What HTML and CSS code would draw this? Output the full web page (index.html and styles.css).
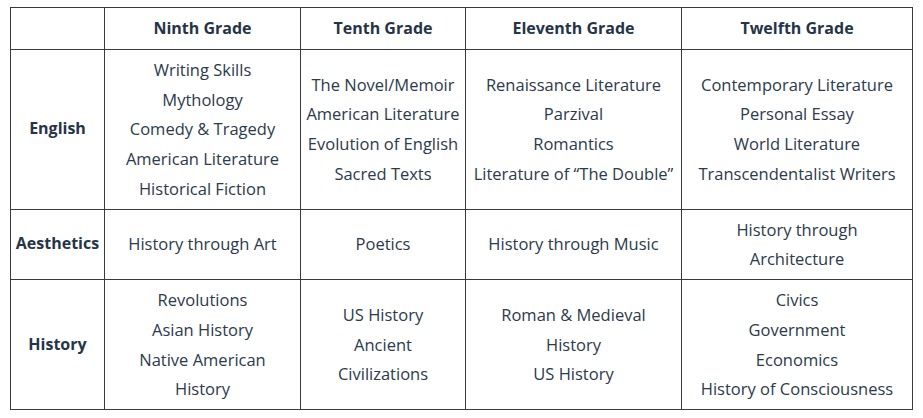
FILE: index.html
```html
<!DOCTYPE html>
<html>
<head>
<meta charset="utf-8">
<link rel="stylesheet" href="styles.css">
</head>
<body>
<table class="grades">
  <colgroup>
    <col class="c0"><col class="c1"><col class="c2"><col class="c3"><col class="c4">
  </colgroup>
  <thead>
    <tr class="head">
      <th></th>
      <th>Ninth Grade</th>
      <th>Tenth Grade</th>
      <th>Eleventh Grade</th>
      <th>Twelfth Grade</th>
    </tr>
  </thead>
  <tbody>
    <tr class="r-english">
      <th>English</th>
      <td>Writing Skills<br>Mythology<br>Comedy &amp; Tragedy<br>American Literature<br>Historical Fiction</td>
      <td>The Novel/Memoir<br>American Literature<br>Evolution of English<br>Sacred Texts</td>
      <td>Renaissance Literature<br>Parzival<br>Romantics<br>Literature of “The Double”</td>
      <td>Contemporary Literature<br>Personal Essay<br>World Literature<br>Transcendentalist Writers</td>
    </tr>
    <tr class="r-aes">
      <th>Aesthetics</th>
      <td>History through Art</td>
      <td>Poetics</td>
      <td>History through Music</td>
      <td>History through<br>Architecture</td>
    </tr>
    <tr class="r-hist">
      <th>History</th>
      <td>Revolutions<br>Asian History<br>Native American<br>History</td>
      <td>US History<br>Ancient<br>Civilizations</td>
      <td>Roman &amp; Medieval<br>History<br>US History</td>
      <td>Civics<br>Government<br>Economics<br>History of Consciousness</td>
    </tr>
  </tbody>
</table>
</body>
</html>
```
FILE: styles.css
```css
html, body {
  margin: 0;
  padding: 0;
  background: #ffffff;
}
body {
  padding: 7px 0 0 10px;
  font-family: "Open Sans", "Noto Sans", sans-serif;
  color: #2b3a4c;
}
.grades {
  border-collapse: collapse;
  table-layout: fixed;
  width: 902px;
  line-height: 29.75px;
}
.c0 { width: 94px; }
.c1 { width: 196px; }
.c2 { width: 165px; }
.c3 { width: 216px; }
.c4 { width: 231px; }
.grades th,
.grades td {
  border: 1px solid #3a3a3a;
  padding: 5px 0;
  text-align: center;
  vertical-align: middle;
  white-space: nowrap;
}
.grades .head th {
  padding: 6px 0 5px;
}
.grades th {
  font-size: 16px;
  font-weight: 700;
  color: #263447;
}
.grades td {
  font-size: 16.5px;
  font-weight: 400;
}
```
